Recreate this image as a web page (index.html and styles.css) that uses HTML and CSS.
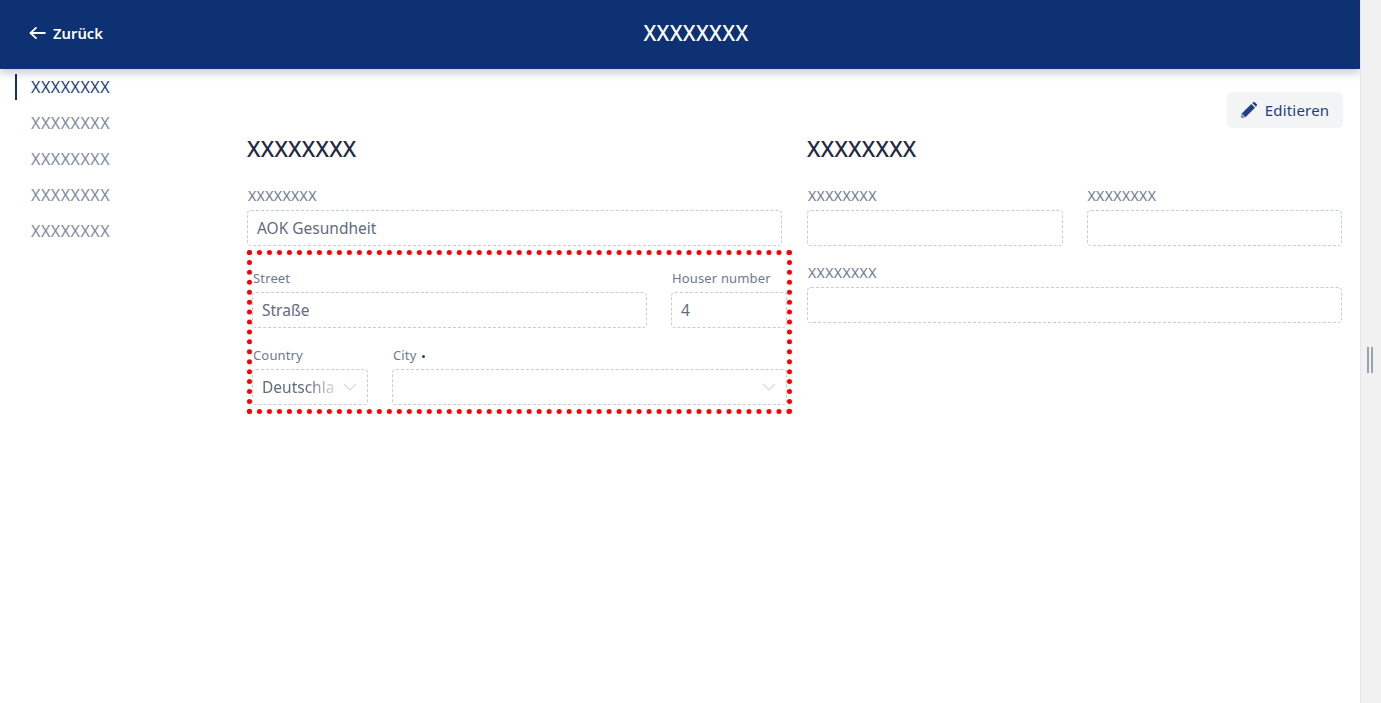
FILE: index.html
```html
<!DOCTYPE html>
<html lang="de">
<head>
<meta charset="utf-8">
<title>XXXXXXXX</title>
<link rel="stylesheet" href="styles.css">
</head>
<body>
<div class="app">
  <header class="topbar">
    <a class="back" href="#">
      <svg class="back-icon" viewBox="0 0 17 14" width="17" height="14"><path d="M16.500 7H1.500M7.500 1.300 1.500 7l6 5.700" fill="none" stroke="currentColor" stroke-width="1.800"/></svg>
      <span>Zurück</span>
    </a>
    <h1 class="title">XXXXXXXX</h1>
  </header>
  <div class="content">
    <nav class="sidenav">
      <a class="nav-item active" href="#">XXXXXXXX</a>
      <a class="nav-item" href="#">XXXXXXXX</a>
      <a class="nav-item" href="#">XXXXXXXX</a>
      <a class="nav-item" href="#">XXXXXXXX</a>
      <a class="nav-item" href="#">XXXXXXXX</a>
    </nav>
    <main class="main">
      <div class="actions">
        <button class="edit" type="button">
          <svg viewBox="0 0 16 16" width="16" height="16"><path d="M0 16 1 11.300 10.300 2 14 5.700 4.700 15Z" fill="#1e3f82"/><path d="M1 11.300 4.700 15 0 16Z" fill="#8a9ab8"/><path d="M11.200 1.100 12 .4a1.500 1.500 0 0 1 2 0l1.600 1.600a1.500 1.500 0 0 1 0 2L14.900 4.800Z" fill="#1e3f82"/></svg>
          <span>Editieren</span>
        </button>
      </div>
      <div class="columns">
        <section>
          <h2 class="heading">XXXXXXXX</h2>
          <div class="field">
            <label class="label">XXXXXXXX</label>
            <div class="input">AOK Gesundheit</div>
          </div>
          <div class="group">
            <div class="row row-street">
              <div class="field grow">
                <label class="label small">Street</label>
                <div class="input">Straße</div>
              </div>
              <div class="field house">
                <label class="label small">Houser number</label>
                <div class="input">4</div>
              </div>
            </div>
            <div class="row">
              <div class="field country">
                <label class="label small">Country</label>
                <div class="input select"><span class="fade">Deutschla</span>
                  <svg class="chev" viewBox="0 0 14 8" width="14" height="8"><path d="M1 1l6 6 6-6" fill="none" stroke="currentColor" stroke-width="1.200"/></svg>
                </div>
              </div>
              <div class="field grow">
                <label class="label small">City <span class="dot"></span></label>
                <div class="input select">
                  <svg class="chev" viewBox="0 0 14 8" width="14" height="8"><path d="M1 1l6 6 6-6" fill="none" stroke="currentColor" stroke-width="1.200"/></svg>
                </div>
              </div>
            </div>
          </div>
        </section>
        <section>
          <h2 class="heading">XXXXXXXX</h2>
          <div class="row-plain">
            <div class="field grow">
              <label class="label">XXXXXXXX</label>
              <div class="input"></div>
            </div>
            <div class="field grow">
              <label class="label">XXXXXXXX</label>
              <div class="input"></div>
            </div>
          </div>
          <div class="field">
            <label class="label">XXXXXXXX</label>
            <div class="input"></div>
          </div>
        </section>
      </div>
    </main>
  </div>
</div>
<aside class="rail"><span class="handle"></span></aside>
</body>
</html>
```

FILE: styles.css
```css
* { box-sizing: border-box; }
html, body { height: 100%; }
body {
  margin: 0;
  display: flex;
  height: 703px;
  overflow: hidden;
  background: #fff;
  font-family: "Noto Sans", sans-serif;
  color: #6b7a90;
}
.app { flex: 1; min-width: 0; display: flex; flex-direction: column; }
.topbar {
  position: relative;
  height: 69px;
  flex: none;
  background: #0d3173;
  box-shadow: 0 4px 8px rgba(30, 50, 90, .25);
  display: flex;
  align-items: center;
  justify-content: center;
  color: #fff;
}
.back {
  position: absolute;
  left: 29px;
  top: 24px;
  display: flex;
  align-items: center;
  gap: 7px;
  color: #fff;
  text-decoration: none;
  font-size: 14.8px;
  font-weight: 600;
  line-height: 18px;
}
.title { margin: 0 0 3px 32px; font-size: 21px; font-weight: 500; line-height: 28px; letter-spacing: .3px; }
.content { flex: 1; display: flex; }
.sidenav { width: 247px; flex: none; padding: 5px 0 0 15px; display: flex; flex-direction: column; gap: 10px; }
.nav-item {
  height: 26px;
  padding-left: 14px;
  border-left: 2px solid transparent;
  font-size: 16px;
  line-height: 26px;
  letter-spacing: .5px;
  color: #7f8ba0;
  text-decoration: none;
}
.nav-item.active { border-left-color: #0d3173; color: #1e3f82; }
.main { flex: 1; min-width: 0; padding: 23px 18px 0 0; }
.actions { display: flex; justify-content: flex-end; height: 36px; margin-right: -1px; }
.edit {
  width: 116px;
  height: 36px;
  border: 0;
  border-radius: 5px;
  background: #f3f4f6;
  color: #1e3f82;
  font: 400 15px "Noto Sans", sans-serif;
  letter-spacing: .2px;
  display: flex;
  align-items: center;
  justify-content: center;
  gap: 8px;
  padding: 0;
}
.columns { display: grid; grid-template-columns: 535px 535px; column-gap: 25px; }
.heading { margin: 5px 0 23px; font-size: 22px; font-weight: 500; line-height: 30px; letter-spacing: .25px; color: #1f2a44; }
.field { display: flex; flex-direction: column; min-width: 0; }
.label { display: block; font-size: 14px; line-height: 20px; height: 24px; padding-left: 1px; letter-spacing: .4px; color: #6b7a90; }
.label.small { font-size: 13px; letter-spacing: .15px; }
.input {
  height: 36px;
  border: 1px dashed #c5ccd8;
  border-radius: 4px;
  padding: 0 9px;
  font-size: 15.5px;
  line-height: 35px;
  color: #5f6b80;
  background: #fff;
  white-space: nowrap;
  overflow: hidden;
  position: relative;
}
.group {
  width: 545px;
  height: 164px;
  margin-top: 4px;
  padding: 13px 0 0;
  border: 5px dotted #f00;
}
.row { display: flex; gap: 24px; margin-bottom: 17px; }
.row-plain { display: flex; gap: 24px; margin-bottom: 17px; }
.grow { flex: 1; }
.house { width: 116px; flex: none; }
.country { width: 116px; flex: none; }
.select { padding-right: 33px; }
.fade {
  display: block;
  overflow: hidden;
  -webkit-mask-image: linear-gradient(to right, #000 62%, rgba(0, 0, 0, .25) 100%);
  mask-image: linear-gradient(to right, #000 62%, rgba(0, 0, 0, .25) 100%);
}
.chev { position: absolute; right: 10px; top: 13px; color: #d5d9df; }
.dot { display: inline-block; width: 3px; height: 3px; margin-left: 2px; border-radius: 50%; background: #1e3f82; vertical-align: middle; }
.rail {
  width: 21px;
  flex: none;
  background: #f1f1f1;
  border-left: 1px solid #e5e5e5;
  position: relative;
}
.handle {
  position: absolute;
  left: 6px;
  top: 347px;
  width: 6px;
  height: 26px;
  border-left: 2px solid #9aa3ae;
  border-right: 2px solid #9aa3ae;
}
```
